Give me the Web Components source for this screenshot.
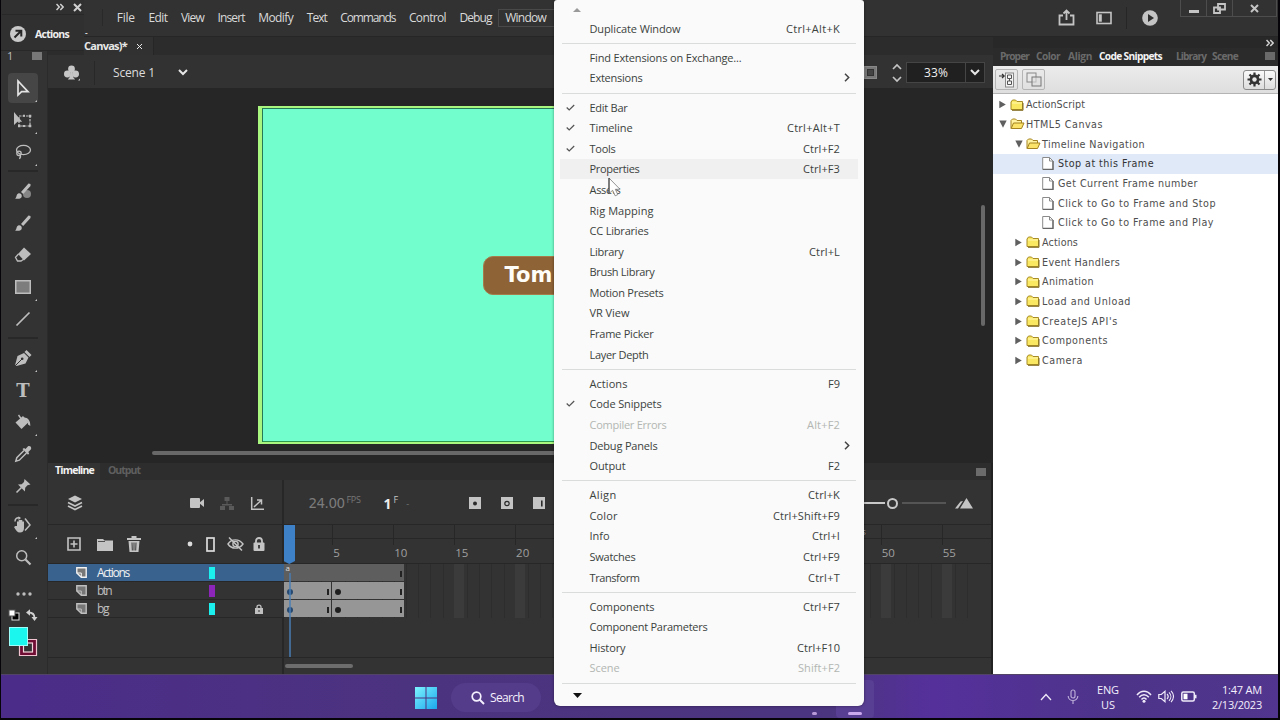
<!DOCTYPE html>
<html lang="en">
<head>
<meta charset="utf-8">
<title>Animate</title>
<style>
    body {
        margin: 0;
        width: 1280px;
        height: 720px;
        overflow: hidden;
        background: #060409;
        font-family: "Open Sans", "Noto Sans", sans-serif;
        font-size: 11px;
        color: #d4d4d4;
    }
</style>
</head>
<body>
<an-desktop></an-desktop>

<script>
const ICONS = {
    chevrons: [8, 8, '<path d="M0.5 1l2.8 3-2.8 3M4.3 1l2.8 3-2.8 3" fill="none" stroke="currentColor" stroke-width="1.5"/>'],
    cross: [9, 9, '<path d="M1 1l7 7M8 1l-7 7" fill="none" stroke="currentColor" stroke-width="2"/>'],
    thincross: [7, 7, '<path d="M1 1l5 5M6 1l-5 5" fill="none" stroke="currentColor"/>'],
    burger: [10, 8, '<path d="M0 1h10M0 3h10M0 5h10M0 7h10" stroke="currentColor" stroke-width="1.2"/>'],
    jump: [16, 16, '<circle cx="8" cy="8" r="8" fill="#c9c9c9"/><path d="M4.5 11.5l6-6M5.5 4.7h5.8v5.8" fill="none" stroke="#262626" stroke-width="2"/>'],
    club: [18, 18, '<g fill="#c6c6c6"><circle cx="8.5" cy="5" r="3.4"/><circle cx="4.4" cy="10" r="3.4"/><circle cx="12.6" cy="10" r="3.4"/><path d="M7.500 7h2l.6 6 2 2.600H4.800l2-2.600z"/><path d="M17 14.500v2h-2z"/></g>'],
    down: [10, 7, '<path d="M1 1l4 4 4-4" fill="none" stroke="#e6e6e6" stroke-width="2"/>'],
    step: [10, 20, '<path d="M1 6l4-4 4 4M1 14l4 4 4-4" fill="none" stroke="#c4c4c4" stroke-width="1.7"/>'],
    clip: [13, 13, '<path d="M2 0v13M11 0v13M0 2h13M0 11h13" stroke="#777" stroke-width="2"/><rect x="4" y="4" width="5" height="5" fill="#444"/><rect x="0.5" y="0.5" width="12" height="12" fill="none" stroke="#888"/>'],
    share: [17, 17, '<path d="M5 6.5H1.5v9h14v-9H12M8.5 11V1.5M5.5 4.5l3-3 3 3" fill="none" stroke="currentColor" stroke-width="1.8"/>'],
    workspace: [16, 14, '<rect x="1" y="1.5" width="14" height="11" fill="none" stroke="currentColor" stroke-width="1.6"/><rect x="2.8" y="3.3" width="3" height="7.4" fill="currentColor"/>'],
    play: [16, 16, '<circle cx="8" cy="8" r="7.8" fill="currentColor"/><path d="M6 4v8l6-4z" fill="#2e2e2e"/>'],
    restore: [13, 11, '<path d="M5 1h7v5.5H5zM1 4.5h6V10H1z" fill="none" stroke="currentColor" stroke-width="1.8"/>'],
    minimise: [10, 3, '<rect width="10" height="3" fill="currentColor"/>'],
    // tools
    select: [14, 20, '<path d="M2 2v14l3.6-3.4H12z" fill="none" stroke="#e4e4e4" stroke-width="1.7"/>'],
    transform: [22, 18, '<path d="M2 1v13l3.5-3.2h4.6z" fill="currentColor"/><path d="M7 5h11v10H7z" fill="none" stroke="currentColor" stroke-width="1.2" stroke-dasharray="2.5 1"/><path d="M6 13.7h2.5v2.5H6zM16.8 3.7h2.5v2.5h-2.5zM16.8 13.7h2.5v2.5h-2.5zM11 3.7h2v2h-2zM11 14h2v2h-2z" fill="currentColor"/>'],
    lasso: [18, 16, '<ellipse cx="9.5" cy="6" rx="7" ry="4.7" fill="none" stroke="currentColor" stroke-width="1.3"/><circle cx="5" cy="9.3" r="2.2" fill="none" stroke="currentColor" stroke-width="1.3"/><path d="M6 10c1 2 .5 3.5-.5 5" fill="none" stroke="currentColor" stroke-width="1.3"/>'],
    fluid: [18, 18, '<circle cx="13" cy="12" r="4" fill="#858585"/><path d="M1 16.5c2-1 1-4 3.2-5 1.8-.7 3.8.8 3.6 2.7C7.500 17 4 17 1 16.500zM7 10L14.500 1.500l2 .5v2L9.200 12z" fill="currentColor"/>'],
    brush: [18, 18, '<path d="M1 16.500c2-1 1-4 3.200-5 1.800-.7 3.800.8 3.600 2.700C7.500 17 4 17 1 16.500zM7 10L14.500 1.500l2 .5v2L9.200 12z" fill="currentColor"/>'],
    eraser: [18, 18, '<path d="M10 1.500L17 8 10 14.500 4 8z" fill="currentColor"/><path d="M4.500 8L1.500 11.300l2 3.700h3.500l3-2" fill="none" stroke="currentColor" stroke-width="1.300"/>'],
    rect: [16, 14, '<rect x="0.75" y="0.75" width="14.500" height="12.500" fill="#7d7d7d" stroke="currentColor" stroke-width="1.500"/>'],
    line: [16, 16, '<path d="M1.500 14.500l13-13" stroke="currentColor" stroke-width="1.700"/>'],
    pen: [18, 18, '<path d="M10 4l4.500 4.500-3 6L2.500 17 1.200 15.700 3.500 7z" fill="currentColor"/><path d="M10.500 3l2-2 5 5-2 2z" fill="currentColor"/><path d="M1.500 16.500L8 10" stroke="#323232"/><circle cx="8.200" cy="9.800" r="1.300" fill="#323232"/>'],
    bucket: [18, 18, '<path d="M1.500 9.500L9 3l5.500 6.300L7.500 16z" fill="currentColor"/><path d="M9.500 9L4.500 2" stroke="currentColor" stroke-width="1.400"/><path d="M10 4.500c4 0 6.500 3 6.300 8.500l-2.300-1.500c.3-2.500-1-4-4-5z" fill="currentColor"/>'],
    dropper: [18, 18, '<path d="M10 5.500L2.800 12.700 1.800 16.200l3.500-1L12.500 8" fill="none" stroke="currentColor" stroke-width="1.500"/><path d="M8.500 4l1.500-1 1.500 1 2.300-2.500c2-1.300 4.300.7 3 3L14.300 7l.9 1.500-1.200 1.200z" fill="currentColor"/>'],
    pin: [17, 17, '<path d="M9.500 1l6 5.500-3 .8-2.300 2.500-.3 3.700L3 6.600l3.700-.3L9 4z" fill="currentColor"/><path d="M1.500 14.500l5-5" stroke="currentColor" stroke-width="1.600"/>'],
    hand: [20, 18, '<path d="M4 10V5.500h1.700V8V4h1.800v4V4h1.800v4.500V5.500H11V12c0 3-1.500 4.500-4 4.500-2.800 0-4-2-6-5.500l1.400-1z" fill="currentColor"/><path d="M2 5.500C2 2.500 4 1.500 6.500 2M12 2.500l5 6.500-5 5.500" fill="none" stroke="currentColor" stroke-width="1.500"/><path d="M5.500 .2L8 2 5.500 4z" fill="currentColor"/>'],
    zoom: [17, 17, '<circle cx="6.700" cy="6.700" r="5" fill="none" stroke="currentColor" stroke-width="1.500"/><path d="M10.500 10.500l5 5" stroke="currentColor" stroke-width="2.200"/>'],
    dots: [16, 4, '<g fill="currentColor"><circle cx="2" cy="2" r="1.700"/><circle cx="8" cy="2" r="1.700"/><circle cx="14" cy="2" r="1.700"/></g>'],
    defaults: [12, 12, '<rect x="4" y="4" width="7" height="7" fill="#000" stroke="#ddd"/><rect x="1" y="1" width="6" height="6" fill="#fff" stroke="#555"/>'],
    swap: [12, 12, '<path d="M2.500 3.500c4 0 6 1.500 6 5.500" fill="none" stroke="#d0d0d0" stroke-width="1.800"/><path d="M0 3.500L4 .3v6.400zM8.500 12L5.500 8h6z" fill="#d0d0d0"/>'],
    swatches: [30, 30, '<path d="M10.500 12.500h17v16h-17z" fill="#6f0d33" stroke="#f1c3d0" stroke-width="1.200"/><rect x="14.500" y="16" width="9" height="9" fill="#333" stroke="#f3d5dd" stroke-width="1.200"/><rect x=".5" y=".5" width="18" height="18" fill="#1bf7ee" stroke="#9ffdf9"/>'],
    // timeline
    layers: [16, 16, '<path d="M8 .5l7 3.500-7 3.500L1 4z" fill="currentColor"/><path d="M1 7.500l7 3.500 7-3.500M1 11l7 3.500 7-3.500" fill="none" stroke="currentColor" stroke-width="1.700"/>'],
    camera: [16, 12, '<rect x="1" y="1" width="10" height="10" rx="1" fill="currentColor"/><path d="M10 6l5-4v8z" fill="currentColor"/>'],
    parenting: [16, 15, '<path d="M5.500 1h5v4h-5zM1 10h5v4H1zM10 10h5v4h-5zM7.500 5h1v4h-1zM3 8h10v1.500H3z" fill="#5a5a5a"/>'],
    graph: [15, 15, '<path d="M1.700 1v12.300H14M4 11l7-6.500M7 4h4.500v4.500" fill="none" stroke="currentColor" stroke-width="1.500"/>'],
    addlayer: [14, 14, '<path d="M1 1h12v12H1zM7 3.500v7M3.500 7h7" fill="none" stroke="currentColor" stroke-width="1.600"/>'],
    folder: [16, 13, '<path d="M0 1h6l1.500 1.500H16V13H0z" fill="currentColor"/><path d="M1 3.500h7" stroke="#333" stroke-width=".8"/>'],
    trash: [14, 16, '<path d="M0 2h4.500V0h5v2H14v2H0zM1.500 5h11l-1 11h-9z" fill="currentColor"/><path d="M5 6.500l.3 8M7 6.500v8M9 6.500l-.3 8" stroke="#3a3a3a"/>'],
    dot: [6, 6, '<circle cx="3" cy="3" r="2.400" fill="#dcdcdc"/>'],
    outline: [9, 15, '<rect x="1" y="1" width="7" height="13" fill="none" stroke="#dcdcdc" stroke-width="1.700"/>'],
    hide: [17, 16, '<path d="M1 8c3.500-5.500 11-5.500 15 0-4 5.500-11.500 5.500-15 0z" fill="none" stroke="currentColor" stroke-width="1.400"/><circle cx="8.500" cy="8" r="2.600" fill="none" stroke="currentColor" stroke-width="1.400"/><path d="M2 1.500l13 13" stroke="currentColor" stroke-width="1.500"/>'],
    lock: [12, 14, '<path d="M3 6V4c0-4 6-4 6 0v2" fill="none" stroke="currentColor" stroke-width="1.800"/><rect x=".5" y="5.500" width="11" height="8.500" rx="1" fill="currentColor"/><path d="M6 8v3.500" stroke="#333" stroke-width="1.800"/>'],
    smalllock: [8, 10, '<path d="M2 5V3c0-2.500 4-2.500 4 0v2" fill="none" stroke="currentColor" stroke-width="1.300"/><rect y="4" width="8" height="6" fill="currentColor"/><path d="M4 6v2" stroke="#333"/>'],
    page: [11, 11, '<path d="M.8 .8h9.400v9.400H5.300L.8 6z" fill="#777" stroke="currentColor" stroke-width="1.400"/><path d="M.8 6h4.500v4.200" fill="none" stroke="currentColor"/>'],
    keyframe: [12, 12, '<rect width="12" height="12" fill="#c4c4c4"/><circle cx="6" cy="6.500" r="2" fill="#2b2b2b"/>'],
    blankkey: [12, 12, '<rect width="12" height="12" fill="#c4c4c4"/><circle cx="6" cy="6.500" r="2.200" fill="none" stroke="#2b2b2b" stroke-width="1.200"/>'],
    addframe: [12, 12, '<rect width="12" height="12" fill="#c4c4c4"/><rect x="8" y="3.500" width="1.600" height="6" fill="#2b2b2b"/>'],
    mountains: [18, 11, '<path d="M0 10.500L5.500 3.500 8 3 3 10.500zM5 10.500L11.500 0 18 10.500z" fill="#c4c4c4"/>'],
    // snippets panel
    right: [7, 9, '<path d="M.3 .8v7.400L6.800 4.500z" fill="#5f5f5f"/>'],
    open: [8, 8, '<path d="M.3 .5h7.400L4 7.800z" fill="#5f5f5f"/>'],
    closedfolder: [14, 12, '<path d="M1 10.500V3l1.500-2h3L7 2.500h5.500v8z" fill="#fbe862" stroke="#a68b26"/><path d="M2 4h10" stroke="#fff7b0"/><path d="M13 4v7.300H2" fill="none" stroke="#806a1c"/>'],
    openfolder: [15, 12, '<path d="M1 10.500V2.500L2.500 1h3L7 2.500h4.500V5" fill="#fff2a0" stroke="#a3821f"/><path d="M1.200 10.500L3.500 5H14l-2.500 5.500z" fill="#fbe36a" stroke="#a3821f"/>'],
    file: [12, 13, '<path d="M.7 .5h6.800l3.500 3.500v8.500H.7z" fill="#fff" stroke="#8a8a8a"/><path d="M11 4v8.500H1" fill="none" stroke="#666" stroke-width="1.300"/><path d="M7.500 .5V4H11" fill="none" stroke="#8a8a8a"/>'],
    insert: [16, 16, '<path d="M0 4h5M3 2l2.200 2L3 6" fill="none" stroke="#333" stroke-width="1.200"/><rect x="6.500" y="1" width="8" height="14" fill="#f4f4f4" stroke="#888"/><path d="M8.500 3h4v3.500h-4zM8.500 9h4v3.500h-4zM10.500 6.500V9" fill="none" stroke="#555"/>'],
    copy: [16, 15, '<rect x="1" y="1" width="9" height="9" fill="#e9e9e9" stroke="#888"/><rect x="6" y="5" width="9" height="9" fill="#ddd" fill-opacity=".6" stroke="#777"/>'],
    gear: [15, 15, '<path d="M7.500 .5v14M.5 7.500h14M2.500 2.500l10 10M12.500 2.500l-10 10" stroke="#333" stroke-width="2.200"/><circle cx="7.500" cy="7.500" r="3.700" fill="none" stroke="#333" stroke-width="2.400"/><circle cx="7.500" cy="7.500" r="2.200" fill="#e8e8e8"/>'],
    caret: [5, 3, '<path d="M0 0h5L2.500 3z" fill="#333"/>'],
    // menu
    check: [9, 7, '<path d="M.7 3.500l2.500 2.500 5-5" fill="none" stroke="#555" stroke-width="1.200"/>'],
    submenu: [6, 9, '<path d="M1 .8l3.700 3.700L1 8.200" fill="none" stroke="#444" stroke-width="1.500"/>'],
    scrollup: [8, 4, '<path d="M0 4h8L4 0z" fill="#999"/>'],
    scrolldown: [9, 5, '<path d="M0 0h9L4.500 5z" fill="#111"/>'],
    cursor: [13, 20, '<path d="M1 1v15.500l3.600-3.200 2.600 5.500 2.600-1.200-2.500-5.300H12z" fill="#fff" stroke="#777" stroke-width=".8"/><path d="M1 1v15.500" stroke="#333"/>'],
    // taskbar
    windows: [22, 22, '<defs><linearGradient id="g" x2="1" y2="1"><stop offset="0" stop-color="#7df3ff"/><stop offset="1" stop-color="#1ba7ec"/></linearGradient></defs><path d="M0 0h10.500v10.500H0zM11.500 0H22v10.500H11.500zM0 11.500h10.500V22H0zM11.500 11.500H22V22H11.500z" fill="url(#g)"/>'],
    search: [14, 14, '<circle cx="5.500" cy="5.500" r="4.300" fill="none" stroke="#f5f0ff" stroke-width="1.700"/><path d="M8.500 8.500l4.500 4.500" stroke="#f5f0ff" stroke-width="1.900"/>'],
    up: [12, 8, '<path d="M1 7l5-5.500L11 7" fill="none" stroke="#efeaf8" stroke-width="1.300"/>'],
    mic: [12, 15, '<rect x="4" y="1" width="4" height="8" rx="2" fill="none" stroke="#b9aad6" stroke-width="1.200"/><path d="M1.200 7c0 6 9.600 6 9.600 0M6 11.500V15" fill="none" stroke="#b9aad6" stroke-width="1.200"/>'],
    wifi: [16, 13, '<path d="M1 5c4-5 10-5 14 0M3.200 7.300c3-3.500 6.600-3.500 9.600 0M5.500 9.500c1.500-2 3.500-2 5 0" fill="none" stroke="#f0ebfa" stroke-width="1.500"/><circle cx="8" cy="11.300" r="1.500" fill="#f0ebfa"/>'],
    volume: [16, 13, '<path d="M.8 4.500h2.500L7 1.300v10.400L3.300 8.500H.8z" fill="none" stroke="#f0ebfa" stroke-width="1.200"/><path d="M9 4c1.500 1.500 1.500 3.500 0 5M11 2.300c2.500 2.500 2.500 6 0 8.500M13 .8c3.300 3.300 3.300 8 0 11.400" fill="none" stroke="#f0ebfa" stroke-width="1.100"/>'],
    battery: [16, 11, '<rect x=".8" y="1" width="12.500" height="9" rx="1.500" fill="none" stroke="#f0ebfa" stroke-width="1.500"/><path d="M2.500 2.700h4v5.600h-4z" fill="#fff"/><path d="M14.500 3.800v3.500" stroke="#f0ebfa" stroke-width="2"/>']
};

class UiElement extends HTMLElement {
    constructor() {
        super();
        this.shadow = this.attachShadow({mode: 'open'});
    }

    connectedCallback() {
        this.shadow.innerHTML = this.template();
    }
}

class AnIcon extends UiElement {
    template() {
        const [w, h, body] = ICONS[this.getAttribute('name')];
        return `
            <style>:host { display: block; flex: none; width: ${w}px; height: ${h}px; } svg { display: block; }</style>
            <svg width="${w}" height="${h}" viewBox="0 0 ${w} ${h}">${body}</svg>
        `;
    }
}

// Label whose tracking is adjusted so that it fills the width in "w"
class AnText extends UiElement {
    connectedCallback() {
        this.shadow.innerHTML = `<style>:host { display: inline-block; flex: none; white-space: pre; }</style><slot></slot>`;
        const width = Number(this.getAttribute('w'));
        if (!width) return;
        const natural = this.getBoundingClientRect().width;
        this.style.letterSpacing = (width - natural) / this.textContent.length + 'px';
        this.style.width = width + 'px';
    }
}

class AnMenubar extends UiElement {
    template() {
        const items = [['File', 18], ['Edit', 19], ['View', 23], ['Insert', 27], ['Modify', 35], ['Text', 20], ['Commands', 55], ['Control', 37], ['Debug', 32], ['Window', 41]];
        return `
            <style>
                :host { display: flex; height: 36px; background: #323232; border-bottom: 1px solid #262626; }
                .menus { display: flex; align-items: center; margin-left: 101px; border-left: 1px solid #292929; height: 17px; margin-top: 9px; padding-left: 7px; font-size: 12px; color: #dadada; }
                .menus div { padding: 0 6.8px; line-height: 16px; }
                .menus div:last-child { border: 1px solid #494949; padding: 0 8px 0 5.8px; }
                .right { display: flex; align-items: center; margin-left: auto; height: 35px; color: #c4c4c4; }
                i { width: 1px; height: 22px; background: #262626; margin: 0 15px 0 14px; }
                .buttons { display: flex; height: 17px; margin: 0 1px 0 22px; border: 1px solid #4d4d4d; border-top: 0; align-self: flex-start; box-sizing: border-box; }
                .buttons span { display: flex; width: 26px; justify-content: center; align-items: center; box-sizing: border-box; border-right: 1px solid #4d4d4d; }
                .buttons span:first-child { padding-top: 7px; }
                .buttons span:last-child { width: 43px; border: 0; }
            </style>
            <div class="menus">${items.map(([t, w]) => `<div><an-text w="${w}">${t}</an-text></div>`).join('')}</div>
            <div class="right">
                <an-icon name="share" style="margin-right: 21px"></an-icon>
                <an-icon name="workspace"></an-icon><i></i><an-icon name="play"></an-icon>
                <div class="buttons">
                    <span><an-icon name="minimise"></an-icon></span><span><an-icon name="restore"></an-icon></span><span><an-icon name="cross"></an-icon></span>
                </div>
            </div>
        `;
    }
}

class AnFloatPanel extends UiElement {
    template() {
        return `
            <style>
                :host { display: flex; flex-direction: column; width: 83px; height: 51px; background: #303030; color: #d0d0d0; box-sizing: border-box; border-bottom: 1px solid #282828; }
                .bar { display: flex; align-items: center; justify-content: flex-end; gap: 9px; padding-right: 2px; height: 14px; border-bottom: 1px solid #282828; margin-left: 1px; }
                .body { display: flex; align-items: center; gap: 9px; padding: 3px 0 0 9px; flex: 1; font-size: 10.5px; font-weight: 700; color: #eee; }
            </style>
            <div class="bar"><an-icon name="chevrons"></an-icon><an-icon name="cross"></an-icon></div>
            <div class="body"><an-icon name="jump"></an-icon><an-text w="34">${this.textContent}</an-text></div>
        `;
    }
}

class AnTools extends UiElement {
    template() {
        const groups = [
            ['select*', 'transform*', 'lasso*'],
            ['fluid', 'brush', 'eraser', 'rect*', 'line'],
            ['pen*', 'T', 'bucket*', 'dropper', 'pin'],
            ['hand*', 'zoom']
        ];
        const tool = name => {
            const id = name.replace('*', '');
            const body = id === 'T' ? '<b>T</b>' : `<an-icon name="${id}"></an-icon>`;
            return `<div class="tool ${id} ${id !== name ? 'more' : ''}">${body}</div>`;
        };
        return `
            <style>
                :host { display: flex; flex-direction: column; background: #333; border-right: 1px solid #2b2b2b; box-sizing: border-box; color: #bdbdbd; }
                .top { display: flex; height: 35px; justify-content: space-between; align-items: center; padding: 2px 5px 0 6px; box-sizing: border-box; }
                .tool { display: flex; position: relative; width: 30px; height: 30px; margin: 1px 0 1px 7px; align-items: center; justify-content: center; border-radius: 4px; box-sizing: border-box; }
                .select { background: #464646; padding-top: 2px; }
                .more::after { content: ""; position: absolute; right: 1px; bottom: 1px; border: 1.5px solid #c6c6c6; border-top-color: transparent; border-left-color: transparent; }
                hr { border: 0; height: 2px; background: #282828; margin: 2px 9px 3px 7px; }
                b { font: 700 18px "DejaVu Serif", serif; }
                .dots { display: flex; height: 34px; padding-top: 4px; align-items: center; justify-content: center; }
                .mini { display: flex; gap: 6px; padding: 0 0 0 7px; margin-top: -2px; }
            </style>
            <div class="top"><span>1</span><an-icon name="burger"></an-icon></div>
            ${groups.map(g => g.map(tool).join('')).join('<hr>')}
            <div class="dots"><an-icon name="dots"></an-icon></div>
            <div class="mini"><an-icon name="defaults"></an-icon><an-icon name="swap"></an-icon></div>
            <an-icon name="swatches" style="margin: 6px 0 0 8px"></an-icon>
        `;
    }
}

class AnDocument extends UiElement {
    template() {
        return `
            <style>
                :host { display: flex; flex-direction: column; }
                .tabs { display: flex; height: 18px; background: #2c2c2c; }
                .tab { display: flex; align-items: center; gap: 9px; width: 69px; margin-left: 36px; background: #313131; color: #e8e8e8; font-weight: 700; border-right: 1px solid #262626; }
                .name { display: flex; flex-direction: column; line-height: 12px; margin-top: -13px; }
                .name span { margin: -1px 0 1px 1px; font: 700 8px/12px "Liberation Sans", sans-serif; }
                .edit { display: flex; align-items: center; height: 33px; background: #323232; box-sizing: border-box; color: #dcdcdc; font-size: 12px; padding: 2px 8px 0 15px; }
                .edit i { width: 1px; height: 24px; background: #282828; margin: 0 18px 0 13px; }
                .zoom { display: flex; margin-left: 4px; border: 1px solid #454545; height: 19px; align-items: center; color: #efefef; background: #202020; }
                .zoom > span { display: flex; justify-content: center; width: 58px; border-right: 1px solid #454545; height: 19px; align-items: center; }
                .zoom an-icon { margin: 0 4px; }
                .work { flex: 1; position: relative; padding: 18px 0 0 210px; background: #262626; overflow: hidden; }
                .stage { display: flex; width: 597px; height: 334px; border: solid #a9f77f; border-width: 2px 4px 2px 4px; background: #73ffcd; box-shadow: inset 1px 1px #267a56, inset 0 -1px #2f9a4e; align-items: center; justify-content: center; }
                .button { display: flex; align-items: center; box-sizing: border-box; width: 156px; height: 39px; border-radius: 10px; background: #8e6336; border: 1px solid #a57c4a; padding-left: 21px; font: 700 21px "DejaVu Sans", sans-serif; color: #fffdf8; }
                .h, .v { position: absolute; background: #686868; border-radius: 2px; }
                .h { left: 104px; bottom: 8px; width: 700px; height: 4px; }
                .v { right: 8px; top: 117px; width: 4px; height: 121px; }
            </style>
            <div class="tabs"><div class="tab">
                <div class="name"><span>-</span><an-text w="43">Canvas)*</an-text></div>
                <an-icon name="thincross"></an-icon>
            </div></div>
            <div class="edit">
                <an-icon name="club"></an-icon><i></i><an-text w="42">Scene 1</an-text>
                <an-icon name="down" style="margin-left: 23px"></an-icon>
                <an-icon name="clip" style="margin-left: auto"></an-icon>
                <an-icon name="step" style="margin-left: 15px"></an-icon>
                <div class="zoom"><span><an-text w="24">33%</an-text></span><an-icon name="down"></an-icon></div>
            </div>
            <div class="work">
                <div class="stage"><div class="button"><an-text>Tom</an-text></div></div>
                <div class="h"></div><div class="v"></div>
            </div>
        `;
    }
}

class AnLayer extends UiElement {
    template() {
        const locked = this.hasAttribute('locked');
        return `
            <style>
                :host { display: flex; align-items: center; height: 17px; border-bottom: 1px solid #272727; padding-left: 28px; font-size: 12px; color: #c0c0c0; }
                :host([active]) { background: #3a628f; color: #f2f2f2; }
                span { width: 112px; margin-left: 10px; line-height: 17px; }
                i { width: 6px; height: 12px; background: ${this.getAttribute('color')}; }
            </style>
            <an-icon name="page"></an-icon><span><an-text w="${this.getAttribute('w')}">${this.textContent}</an-text></span><i></i>
            ${locked ? '<an-icon name="smalllock" style="margin-left: 40px"></an-icon>' : ''}
        `;
    }
}

class AnTimeline extends UiElement {
    template() {
        const labels = [[5, '5'], [10, '10'], [15, '15'], [20, '20'], [50, '50'], [55, '55']];
        const key = '<u></u>';
        return `
            <style>
                :host { display: grid; grid-template-columns: 235.5px 1fr; grid-template-rows: 17px 45px 39px 54px 1fr 17px; height: 211px; background: #333; --line: #272727; box-sizing: border-box; border-right: 2px solid #222; }
                .tabs { grid-column: 1 / 3; display: flex; align-items: center; gap: 8px; background: #2d2d2d; font-size: 10.5px; font-weight: 700; color: #5f5f5f; }
                .tabs div { color: #f4f4f4; background: #333; padding: 0 6px 0 7px; line-height: 15px; height: 17px; }
                .tabs > an-text { line-height: 15px; height: 17px; }
                .tabs an-icon { margin: 0 5px 0 auto; color: #aaa; }
                .cell { display: flex; align-items: center; box-sizing: border-box; border-bottom: 1px solid var(--line); color: #c4c4c4; }
                .tools { padding-top: 2px; }
                .l { border-right: 2px solid var(--line); }
                .fps { color: #7c7c7c; font: 13.5px "DejaVu Sans", sans-serif; }
                sup { font: 9px "Open Sans", sans-serif; margin: -7px 0 0 2px; }
                .slider { display: flex; align-items: center; margin: 0 9px 0 auto; }
                .slider s { height: 2px; background: #555; width: 44px; }
                .slider s:first-child { width: 120px; background: #c8c8c8; }
                .slider b { width: 7px; height: 7px; border: 2.500px solid #c8c8c8; border-radius: 50%; margin: 0 4px 0 2px; }
                .ruler, .frames { display: grid; grid-template-columns: repeat(57, 12.2px); }
                .ruler { grid-template-rows: 13px 26px; border-bottom: 1px solid var(--line); box-sizing: border-box; font-size: 11.500px; color: #a0a0a0; position: relative; background: linear-gradient(var(--line), var(--line)) 0 13px / 100% 1px no-repeat; }
                .ruler span { grid-row: 2; align-self: center; padding: 3px 0 0 1px; line-height: 15px; width: 14px; }
                .ruler em { grid-row: 1; border-left: 1px solid var(--line); width: 0; height: 20px; }
                .head { grid-row: 1 / 3; grid-column: 1; width: 11.500px; background: #3f81c6; clip-path: polygon(0 0, 100% 0, 100% 92%, 50% 100%, 0 92%); }
                .frames { width: 692px; position: relative; grid-template-rows: repeat(3, 18px); background: repeating-linear-gradient(90deg, #2d2d2d 0 1px, transparent 1px 12.2px) 0 0; }
                .frames p { margin: 0; grid-row: 1 / 4; background: #3b3b3b; width: 10px; }
                .span { display: flex; align-items: center; justify-content: space-between; margin: 0 1px 1px 0; background: #969696; padding: 3px 2px 0 3px; }
                .span u { width: 6px; height: 6px; border-radius: 50%; background: #1f1f1f; }
                .span::after { content: ""; width: 2px; height: 6px; background: #222; margin-left: auto; }
                .first u { background: #27496f; }
                .frames small { position: absolute; left: 2px; top: 0; font-size: 8px; line-height: 8px; color: #ddd; }
                .needle { position: absolute; left: 5px; top: 9px; width: 2px; height: 84px; background: #4a7eb4; opacity: .75; }
                .bar { width: 68px; height: 4px; border-radius: 2px; background: #6d6d6d; margin-left: 1px; }
                .cell.end { border-bottom: 0; border-top: 1px solid var(--line); }
            </style>
            <div class="tabs"><div><an-text w="39">Timeline</an-text></div><an-text w="32">Output</an-text><an-icon name="burger"></an-icon></div>
            <div class="cell tools l">
                <an-icon name="layers" style="margin-left: 19px"></an-icon>
                <an-icon name="camera" style="margin-left: 106px"></an-icon>
                <an-icon name="parenting" style="margin-left: 14px"></an-icon>
                <an-icon name="graph" style="margin-left: 15px"></an-icon>
            </div>
            <div class="cell tools">
                <an-text class="fps" w="36" style="margin-left: 25px">24.00</an-text><sup style="color: #777"><an-text w="14">FPS</an-text></sup>
                <an-text style="font: 700 14px Open Sans, sans-serif; color: #eee; margin-left: 23px">1</an-text><sup>F</sup><sup style="margin: 0 0 0 8px; color: #777">-</sup>
                <an-icon name="keyframe" style="margin-left: 60px"></an-icon>
                <an-icon name="blankkey" style="margin-left: 20px"></an-icon>
                <an-icon name="addframe" style="margin-left: 20px"></an-icon>
                <div class="slider"><s></s><b></b><s></s></div>
                <an-icon name="mountains" style="margin-right: 18px"></an-icon>
            </div>
            <div class="cell l">
                <an-icon name="addlayer" style="margin-left: 19px"></an-icon>
                <an-icon name="folder" style="margin-left: 16px"></an-icon>
                <an-icon name="trash" style="margin-left: 14px"></an-icon>
                <an-icon name="dot" style="margin-left: 46px"></an-icon>
                <an-icon name="outline" style="margin-left: 13px"></an-icon>
                <an-icon name="hide" style="margin-left: 12px"></an-icon>
                <an-icon name="lock" style="margin-left: 9px"></an-icon>
            </div>
            <div class="ruler">
                ${labels.map(([n, t]) => `<span style="grid-column: ${n}">${t}</span><em style="grid-column: ${n}"></em>`).join('')}
                <span style="grid-row: 1; grid-column: 48; font-size: 9px; padding: 0">2s</span>
                <div class="head"></div>
            </div>
            <div class="layers">
                <an-layer active color="#1bf0ee" w="32">Actions</an-layer>
                <an-layer color="#8d25bb" w="14">btn</an-layer>
                <an-layer locked color="#1bf0ee" w="11">bg</an-layer>
            </div>
            <div class="frames">
                ${[15, 20, 50, 55].map(n => `<p style="grid-column: ${n}"></p>`).join('')}
                <div class="span" style="grid-area: 1 / 1 / 2 / 11; background: #5e5e5e"></div>
                <div class="span first" style="grid-area: 2 / 1 / 3 / 5">${key}</div>
                <div class="span" style="grid-area: 2 / 5 / 3 / 11">${key}</div>
                <div class="span first" style="grid-area: 3 / 1 / 4 / 5">${key}</div>
                <div class="span" style="grid-area: 3 / 5 / 4 / 11">${key}</div>
                <small>a</small><div class="needle"></div>
            </div>
            <div class="l"></div><div></div>
            <div class="cell l end"></div><div class="cell end"><div class="bar"></div></div>
        `;
    }
}

class AnTreeItem extends UiElement {
    template() {
        const kind = this.getAttribute('kind');
        const depth = Number(this.getAttribute('depth'));
        const arrow = kind === 'closed' ? 'right' : 'open';
        const icon = {closed: 'closedfolder', expanded: 'openfolder', file: 'file'}[kind];
        return `
            <style>
                :host { display: flex; align-items: center; height: 19.66px; padding-left: ${6 + depth * 16}px; font: 9.6px "DejaVu Sans", sans-serif; color: #4e4e4e; }
                :host([selected]) { background: #e0e9f8; color: #333; }
                .arrow { width: 11px; }
                .icon { width: 16px; }
            </style>
            <div class="arrow">${kind === 'file' ? '' : `<an-icon name="${arrow}"></an-icon>`}</div>
            <div class="icon"><an-icon name="${icon}"></an-icon></div>
            <an-text w="${this.getAttribute('w')}">${this.textContent}</an-text>
        `;
    }
}

class AnSnippets extends UiElement {
    template() {
        const tabs = [['Proper', 29, 7], ['Color', 24, 8], ['Align', 24, 7], ['Code Snippets', 63, 14], ['Library', 30, 6], ['Scene', 26, 0]];
        const rows = [
            [0, 'closed', 'ActionScript', 59], [0, 'expanded', 'HTML5 Canvas', 77], [1, 'expanded', 'Timeline Navigation', 103],
            [2, 'file', 'Stop at this Frame', 96], [2, 'file', 'Get Current Frame number', 140],
            [2, 'file', 'Click to Go to Frame and Stop', 158], [2, 'file', 'Click to Go to Frame and Play', 156],
            [1, 'closed', 'Actions', 36], [1, 'closed', 'Event Handlers', 78], [1, 'closed', 'Animation', 52], [1, 'closed', 'Load and Unload', 89],
            [1, 'closed', "CreateJS API's", 76], [1, 'closed', 'Components', 66], [1, 'closed', 'Camera', 41]
        ];
        return `
            <style>
                :host { display: flex; flex-direction: column; background: #fff; }
                .top { display: flex; justify-content: flex-end; align-items: center; height: 11px; background: #282828; padding-right: 4px; }
                .tabs { display: flex; align-items: center; height: 18px; padding: 0 3px 2px 7px; box-sizing: border-box; background: #2b2b2b; font-size: 10.2px; font-weight: 700; color: #6a6a6a; }
                .tabs an-icon { margin-left: auto; color: #aaa; }
                .active { color: #f4f4f4; }
                .bar { display: flex; align-items: center; gap: 4px; height: 27px; padding: 0 2px; background: linear-gradient(#ececec, #dedede); border-bottom: 1px solid #b4b4b4; margin-bottom: 1px; }
                .btn { display: flex; width: 21px; height: 19px; align-items: center; justify-content: center; border: 1px solid #b5b5b5; border-radius: 2px; }
                .split { display: flex; margin-left: auto; height: 18px; border: 1px solid #8a8a8a; border-radius: 3px; background: linear-gradient(#fafafa, #ddd); }
                .split span { display: flex; align-items: center; justify-content: center; width: 20px; }
                .split span + span { width: 10px; border-left: 1px solid #999; }
            </style>
            <div class="top"><an-icon name="chevrons"></an-icon></div>
            <div class="tabs">${tabs.map(([t, w, m]) => `<an-text w="${w}" style="margin-right: ${m}px" class="${w === 63 ? 'active' : ''}">${t}</an-text>`).join('')}<an-icon name="burger"></an-icon></div>
            <div class="bar">
                <div class="btn"><an-icon name="insert"></an-icon></div><div class="btn"><an-icon name="copy"></an-icon></div>
                <div class="split"><span><an-icon name="gear"></an-icon></span><span><an-icon name="caret"></an-icon></span></div>
            </div>
            ${rows.map(([d, k, t, w]) => `<an-tree-item depth="${d}" kind="${k}" w="${w}" ${w === 96 ? 'selected' : ''}>${t}</an-tree-item>`).join('')}
        `;
    }
}

class AnMenuItem extends UiElement {
    template() {
        const keys = this.getAttribute('keys');
        return `
            <style>
                :host { display: flex; align-items: center; height: 20.6px; margin: 0 6px; padding: 0 18px 0 5.5px; color: #3c423e; font-size: 11px; }
                :host([hover]) { background: #f0f0f0; }
                :host([disabled]) { color: #b3b6b3; }
                .mark { width: 24px; }
                .end { margin-left: auto; }
            </style>
            <div class="mark">${this.hasAttribute('checked') ? '<an-icon name="check"></an-icon>' : ''}</div>
            <an-text w="${this.getAttribute('w')}">${this.textContent}</an-text>
            ${keys ? `<an-text class="end" w="${this.getAttribute('kw')}">${keys}</an-text>` : ''}
            ${this.hasAttribute('submenu') ? '<an-icon class="end" name="submenu" style="margin-right: -10px"></an-icon>' : ''}
        `;
    }
}

class AnWindowMenu extends UiElement {
    template() {
        // label, label width, shortcut, shortcut width, flags
        const groups = [
            [['Duplicate Window', 91, 'Ctrl+Alt+K', 54]],
            [['Find Extensions on Exchange...', 152], ['Extensions', 53, '', 0, 'submenu']],
            [
                ['Edit Bar', 38, '', 0, 'checked'], ['Timeline', 43, 'Ctrl+Alt+T', 53, 'checked'], ['Tools', 26, 'Ctrl+F2', 37, 'checked'],
                ['Properties', 50, 'Ctrl+F3', 37, 'hover'], ['Assets', 31], ['Rig Mapping', 64], ['CC Libraries', 59], ['Library', 34, 'Ctrl+L', 31],
                ['Brush Library', 65], ['Motion Presets', 74], ['VR View', 40], ['Frame Picker', 64], ['Layer Depth', 59]
            ],
            [['Actions', 38, 'F9', 12], ['Code Snippets', 72, '', 0, 'checked'], ['Compiler Errors', 77, 'Alt+F2', 33, 'disabled'], ['Debug Panels', 68, '', 0, 'submenu'], ['Output', 36, 'F2', 12]],
            [['Align', 27, 'Ctrl+K', 32], ['Color', 28, 'Ctrl+Shift+F9', 67], ['Info', 20, 'Ctrl+I', 28], ['Swatches', 46, 'Ctrl+F9', 37], ['Transform', 50, 'Ctrl+T', 32]],
            [['Components', 65, 'Ctrl+F7', 37], ['Component Parameters', 118], ['History', 36, 'Ctrl+F10', 43], ['Scene', 30, 'Shift+F2', 42, 'disabled']]
        ];
        const item = ([label, w, keys = '', kw = 0, flag = '']) => `<an-menu-item w="${w}" keys="${keys}" kw="${kw}" ${flag}>${label}</an-menu-item>`;
        return `
            <style>
                :host { display: flex; flex-direction: column; box-sizing: border-box; width: 310px; height: 706px; background: #f9faf9; border-radius: 3px 3px 6px 6px; box-shadow: 0 0 3px rgba(0, 0, 0, .45); }
                .up { height: 18px; padding: 8px 0 0 19px; box-sizing: border-box; }
                .down { padding: 6px 0 0 19px; }
                hr { border: 0; height: 1px; background: #dadcdb; margin: 4.4px 8px 3.1px; }
            </style>
            <div class="up"><an-icon name="scrollup"></an-icon></div>
            ${groups.map(g => g.map(item).join('') + '<hr>').join('')}
            <div class="down"><an-icon name="scrolldown"></an-icon></div>
        `;
    }
}

class AnTaskbar extends UiElement {
    template() {
        return `
            <style>
                :host { display: flex; align-items: center; height: 44px; box-sizing: border-box; border-top: 1px solid #514466; padding: 2px 16px 0 414px; background: linear-gradient(90deg, #4b2c89, #4c337f 33%, #4c3580 65%, #55309b 73%, #4d3489 88%, #51358e); color: #f4f0fc; }
                .search { display: flex; align-items: center; gap: 5px; height: 29px; width: 90px; box-sizing: border-box; padding-left: 20px; margin-left: 14px; border-radius: 15px; background: #553c8a; font-size: 12px; }
                .apps { display: flex; align-items: flex-end; height: 41px; margin-left: 271px; gap: 28px; }
                .apps i { width: 5px; height: 3px; border-radius: 2px; background: #b99ad8; margin-bottom: 3px; }
                .apps div { display: flex; align-items: flex-end; justify-content: center; width: 38px; height: 38px; border-radius: 4px; background: #593f93; margin-left: -9px; }
                .apps div i { width: 14px; background: #cba9ee; margin-bottom: 3px; }
                .tray { display: flex; align-items: center; margin-left: auto; margin-top: -2px; }
                .two { display: flex; flex-direction: column; line-height: 15px; }
            </style>
            <an-icon name="windows"></an-icon>
            <div class="search"><an-icon name="search"></an-icon><an-text w="34">Search</an-text></div>
            <div class="apps"><i></i><div><i></i></div></div>
            <div class="tray">
                <an-icon name="up"></an-icon>
                <an-icon name="mic" style="margin-left: 15px"></an-icon>
                <div class="two" style="align-items: center; margin-left: 18px"><an-text w="22">ENG</an-text><an-text w="14">US</an-text></div>
                <an-icon name="wifi" style="margin-left: 17px"></an-icon>
                <an-icon name="volume" style="margin-left: 6px"></an-icon>
                <an-icon name="battery" style="margin-left: 7px"></an-icon>
                <div class="two" style="align-items: flex-end; margin-left: 15px"><an-text w="40">1:47 AM</an-text><an-text w="50">2/13/2023</an-text></div>
            </div>
        `;
    }
}

class AnDesktop extends UiElement {
    template() {
        return `
            <style>
                :host { display: grid; position: relative; width: 1277px; height: 718px; margin-left: 1px; grid-template-columns: 47px 945px 285px; grid-template-rows: 37px 637px 44px; }
                an-menubar, an-taskbar { grid-column: 1 / 4; }
                .center { display: flex; flex-direction: column; }
                an-document { flex: 1; }
                an-float-panel { position: absolute; left: 0; top: 0; }
                an-window-menu { position: absolute; left: 553px; top: 0; }
                .cursor { position: absolute; left: 607px; top: 177px; }
            </style>
            <an-menubar></an-menubar>
            <an-tools></an-tools>
            <div class="center"><an-document></an-document><an-timeline></an-timeline></div>
            <an-snippets></an-snippets>
            <an-taskbar></an-taskbar>
            <an-float-panel>Actions</an-float-panel>
            <an-window-menu></an-window-menu>
            <an-icon class="cursor" name="cursor"></an-icon>
        `;
    }
}

customElements.define('an-icon', AnIcon);
customElements.define('an-menubar', AnMenubar);
customElements.define('an-float-panel', AnFloatPanel);
customElements.define('an-tools', AnTools);
customElements.define('an-document', AnDocument);
customElements.define('an-layer', AnLayer);
customElements.define('an-timeline', AnTimeline);
customElements.define('an-tree-item', AnTreeItem);
customElements.define('an-snippets', AnSnippets);
customElements.define('an-menu-item', AnMenuItem);
customElements.define('an-window-menu', AnWindowMenu);
customElements.define('an-taskbar', AnTaskbar);
customElements.define('an-desktop', AnDesktop);
// last, so that every label is laid out before it is measured
customElements.define('an-text', AnText);
</script>
</body>
</html>
